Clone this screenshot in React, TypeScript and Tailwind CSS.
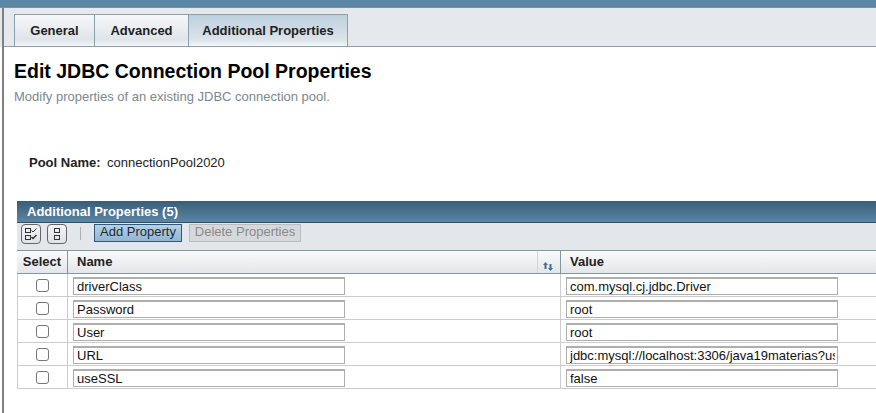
const rows = [
  { name: "driverClass", value: "com.mysql.cj.jdbc.Driver" },
  { name: "Password", value: "root" },
  { name: "User", value: "root" },
  { name: "URL", value: "jdbc:mysql://localhost:3306/java19materias?useSSL=false" },
  { name: "useSSL", value: "false" },
];

function SelectAllIcon() {
  return (
    <svg width="12" height="12" viewBox="0 0 12 12" fill="none" stroke="#333" strokeWidth="1">
      <rect x="0.5" y="0.5" width="5" height="4" />
      <rect x="0.5" y="7.5" width="5" height="4" />
      <path d="M6.5 2.5l1.5 1.5 3.5-3.5" />
      <path d="M6.5 9l1.5 1.5 3.5-3.5" strokeWidth="1.5" />
    </svg>
  );
}

function DeselectAllIcon() {
  return (
    <svg width="8" height="12" viewBox="0 0 8 12" fill="none" stroke="#333" strokeWidth="1">
      <rect x="1.5" y="0.5" width="5" height="4" />
      <rect x="1.5" y="7.5" width="5" height="4" />
    </svg>
  );
}

function SortIcon() {
  return (
    <svg width="10" height="9" viewBox="0 0 10 9" fill="#3f6f96">
      <path d="M2.5 0L5 3H3.5V7H1.5V3H0z" />
      <path d="M6.5 2h2v4H10L7.5 9 5 6h1.5z" />
    </svg>
  );
}

function TextBox({ value }: { value: string }) {
  return (
    <input
      readOnly
      value={value}
      className="box-border h-[18px] w-[272px] border border-t-2 border-[#aeaeae] bg-white px-[2px] pl-[3px] text-[13px] text-[#111] outline-none"
    />
  );
}

export default function App() {
  return (
    <div className="h-[413px] w-[876px] overflow-hidden bg-white font-['Liberation_Sans',Arial,sans-serif]">
      <div className="h-[7px] bg-[#5b86a6]" />
      <div className="h-[1px] bg-[#8c8c8c]" />
      <div className="flex h-[405px]">
        <div className="h-[39px] w-[2px] bg-[#e5e8ec]" />
        <div className="flex-1 border-l-2 border-[#808080]">
          <div className="flex h-[39px] items-end border-b border-[#8ba0ae] bg-[#e5e8ec] pl-[10px]">
            <div className="box-border flex h-[32px] w-[81px] items-center justify-center border border-b-0 border-[#8ba0ae] bg-gradient-to-b from-[#f6f7f9] via-[#dfe4ea] via-80% to-[#f4f5f7] text-[13px] font-bold text-[#222]">
              General
            </div>
            <div className="box-border flex h-[32px] w-[94px] items-center justify-center border-y border-r border-b-0 border-[#8ba0ae] bg-gradient-to-b from-[#f6f7f9] via-[#dfe4ea] via-80% to-[#f4f5f7] text-[13px] font-bold text-[#222]">
              Advanced
            </div>
            <div className="box-border flex h-[32px] w-[159px] items-center justify-center border-y border-r border-b-0 border-[#8ba0ae] bg-gradient-to-b from-[#bdd0df] via-[#dde3e9] via-80% to-[#f4f5f7] text-[13px] font-bold text-[#222]">
              Additional Properties
            </div>
          </div>

          <div className="pl-[10px] pt-[13px]">
            <h1 className="text-[19.5px] leading-[23px] font-bold text-black">Edit JDBC Connection Pool Properties</h1>
            <p className="mt-[7px] text-[13px] leading-[14px] text-[#7c8790]">
              Modify properties of an existing JDBC connection pool.
            </p>
          </div>

          <div className="flex items-center pl-[25px] pt-[52px] text-[13px] leading-[14px] text-[#222]">
            <span className="w-[78px] font-bold">Pool Name:</span>
            <span>connectionPool2020</span>
          </div>

          <div className="ml-[13px] mt-[31px]">
            <div className="box-border flex h-[22px] items-center border-b border-[#2f5068] bg-gradient-to-b from-[#3a5d76] to-[#5b86a6] pl-[10px] text-[13px] font-bold text-white">
              Additional Properties (5)
            </div>
            <div className="flex h-[27px] items-start bg-[#e3e6ea] pl-[4px] pt-[1px]">
              <div className="box-border flex h-[20px] w-[20px] items-center justify-center rounded-[4px] border border-[#666] bg-gradient-to-b from-[#f2f3f5] to-[#dfe2e6]">
                <SelectAllIcon />
              </div>
              <div className="ml-[6px] box-border flex h-[20px] w-[20px] items-center justify-center rounded-[4px] border border-[#666] bg-gradient-to-b from-[#f2f3f5] to-[#dfe2e6]">
                <DeselectAllIcon />
              </div>
              <div className="ml-[13px] mt-[3px] h-[13px] w-px bg-[#b0b0b0]" />
              <button className="ml-[13px] box-border h-[18px] w-[88px] border border-[#2d5a80] bg-gradient-to-b from-[#b8d0e3] to-[#8fb6d4] pb-[2px] text-[13px] leading-[14px] text-[#1c2a36]">
                Add Property
              </button>
              <button className="ml-[7px] box-border h-[18px] w-[112px] border border-[#bcbcbc] bg-[#d6d9dc] pb-[2px] text-[13px] leading-[14px] text-[#8a8a8a]">
                Delete Properties
              </button>
            </div>
            <div className="box-border flex h-[24px] border-y border-[#83979f] bg-gradient-to-b from-[#fafafa] to-[#e3e6ea] text-[13px] font-bold text-[#222]">
              <div className="flex w-[50px] items-center justify-center">Select</div>
              <div className="flex w-[470px] items-center border-l border-[#83979f] pl-[9px]">Name</div>
              <div className="flex w-[23px] items-end justify-center border-l border-[#d4d7da] pb-[2px] pr-[3px]">
                <SortIcon />
              </div>
              <div className="flex flex-1 items-center border-l border-[#83979f] pl-[9px]">Value</div>
            </div>
            {rows.map((r) => (
              <div key={r.name} className="box-border flex h-[23px] border-b border-[#cccccc]">
                <div className="flex w-[50px] items-center justify-center border-l border-[#cccccc]">
                  <span className="box-border block h-[13px] w-[13px] rounded-[3px] border border-[#767676] bg-white" />
                </div>
                <div className="flex w-[493px] items-start border-l border-[#cccccc] pl-[5px] pt-[3px]">
                  <TextBox value={r.name} />
                </div>
                <div className="flex flex-1 items-start border-l border-[#cccccc] pl-[5px] pt-[3px]">
                  <TextBox value={r.value} />
                </div>
              </div>
            ))}
          </div>
        </div>
      </div>
    </div>
  );
}
